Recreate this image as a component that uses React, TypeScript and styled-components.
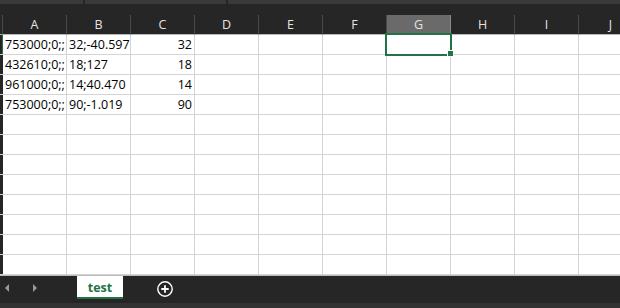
import React from "react";
import styled, { createGlobalStyle } from "styled-components";

const GlobalStyle = createGlobalStyle`
  html, body {
    margin: 0;
    padding: 0;
    background: #262626;
    overflow: hidden;
  }
`;

const FONT = `"Open Sans", "Noto Sans", sans-serif`;
const GREEN = "#217346";
const GRID = "#d4d4d4";

const columns = ["A", "B", "C", "D", "E", "F", "G", "H", "I", "J"];

// sheet content, row by row
const data: (string | number)[][] = [
  ["753000;0;;", "32;-40.597", 32],
  ["432610;0;;", "18;127", 18],
  ["961000;0;;", "14;40.470", 14],
  ["753000;0;;", "90;-1.019", 90],
];

const ROWS = 12;
const SELECTED = { row: 0, col: 6 };

const Frame = styled.div`
  width: 620px;
  height: 308px;
  display: flex;
  flex-direction: column;
  overflow: hidden;
  background: #262626;
  font-family: ${FONT};
`;

const TopStrip = styled.div`
  display: flex;
  gap: 2px;
  height: 4px;
  margin-bottom: 11px;
  background: #262626;
`;

const StripPart = styled.div<{ $w?: number }>`
  background: #3a3a3a;
  ${(p) => (p.$w ? `width: ${p.$w}px; flex: none;` : "flex: 1;")}
`;

const Sheet = styled.div`
  display: grid;
  grid-template-columns: 3px repeat(10, 64px);
  grid-auto-rows: 20px;
  width: 643px;
`;

const Corner = styled.div`
  background: #262626;
  box-sizing: border-box;
  border-bottom: 1px solid #b8b8b8;
  border-right: 1px solid #4a4a4a;
`;

const ColHeader = styled.div<{ $selected?: boolean }>`
  box-sizing: border-box;
  background: ${(p) => (p.$selected ? "#6a6a6a" : "#262626")};
  border-right: 1px solid ${(p) => (p.$selected ? "#8a8a8a" : "#4a4a4a")};
  border-bottom: 1px solid #b8b8b8;
  color: #e4e4e4;
  font-size: 12.5px;
  line-height: 19px;
  text-align: center;
`;

const RowHeader = styled.div<{ $selected?: boolean }>`
  box-sizing: border-box;
  background: #262626;
  border-bottom: 1px solid ${GRID};
  box-shadow: ${(p) => (p.$selected ? `inset -1px 0 0 ${GREEN}` : "none")};
`;

const Cell = styled.div<{ $align?: "left" | "right"; $active?: boolean }>`
  position: ${(p) => (p.$active ? "relative" : "static")};
  box-sizing: border-box;
  background: #ffffff;
  border-right: 1px solid ${GRID};
  border-bottom: 1px solid ${GRID};
  padding: 0 2px;
  font-size: 12.5px;
  line-height: 19px;
  color: #000;
  text-align: ${(p) => p.$align ?? "left"};
  white-space: nowrap;
  overflow: ${(p) => (p.$active ? "visible" : "hidden")};
`;

const SelectionBox = styled.div`
  position: absolute;
  left: -2px;
  top: -2px;
  width: 67px;
  height: 23px;
  box-sizing: border-box;
  border: 2px solid ${GREEN};
  z-index: 2;
`;

const FillHandle = styled.div`
  position: absolute;
  left: 61px;
  top: 16px;
  width: 5px;
  height: 5px;
  background: ${GREEN};
  outline: 1px solid #ffffff;
  z-index: 3;
`;

const TabBar = styled.div`
  display: flex;
  align-items: flex-start;
  height: 28px;
  box-sizing: border-box;
  border-top: 1px solid #bcbcbc;
  background: #262626;
`;

const NavGroup = styled.div`
  display: flex;
  gap: 24px;
  width: 77px;
  box-sizing: border-box;
  padding: 8px 0 0 5px;
`;

const SheetTab = styled.div`
  width: 46px;
  height: 23px;
  box-sizing: border-box;
  background: #ffffff;
  border-bottom: 2px solid ${GREEN};
  color: ${GREEN};
  font-weight: 700;
  font-size: 12.5px;
  line-height: 21px;
  padding-top: 1px;
  text-align: center;
`;

const AddButton = styled.div`
  margin: 5px 0 0 34px;
  width: 16px;
  height: 16px;
  display: flex;
`;

const BottomStrip = styled.div`
  height: 5px;
  background: #333333;
`;

const Arrow = ({ dir }: { dir: "left" | "right" }) => (
  <svg width="4" height="8" viewBox="0 0 4 8">
    <path d={dir === "left" ? "M4 0 L0 4 L4 8 Z" : "M0 0 L4 4 L0 8 Z"} fill="#9a9a9a" />
  </svg>
);

const App = () => {
  return (
    <>
      <GlobalStyle />
      <Frame>
        <TopStrip>
          <StripPart $w={83} />
          <StripPart $w={141} />
          <StripPart />
        </TopStrip>

        <Sheet>
          <Corner />
          {columns.map((c, i) => (
            <ColHeader key={c} $selected={i === SELECTED.col}>
              {c}
            </ColHeader>
          ))}

          {Array.from({ length: ROWS }).map((_, r) => (
            <React.Fragment key={r}>
              <RowHeader $selected={r === SELECTED.row} />
              {columns.map((c, ci) => {
                const v = data[r]?.[ci];
                const active = r === SELECTED.row && ci === SELECTED.col;
                return (
                  <Cell key={c} $align={typeof v === "number" ? "right" : "left"} $active={active}>
                    {v}
                    {active && (
                      <>
                        <SelectionBox />
                        <FillHandle />
                      </>
                    )}
                  </Cell>
                );
              })}
            </React.Fragment>
          ))}
        </Sheet>

        <TabBar>
          <NavGroup>
            <Arrow dir="left" />
            <Arrow dir="right" />
          </NavGroup>
          <SheetTab>test</SheetTab>
          <AddButton>
            <svg width="16" height="16" viewBox="0 0 16 16">
              <circle cx="8" cy="8" r="7.2" fill="none" stroke="#ffffff" strokeWidth="1.4" />
              <path d="M8 4.3 V11.7 M4.3 8 H11.7" stroke="#ffffff" strokeWidth="1.8" />
            </svg>
          </AddButton>
        </TabBar>
        <BottomStrip />
      </Frame>
    </>
  );
};

export default App;
